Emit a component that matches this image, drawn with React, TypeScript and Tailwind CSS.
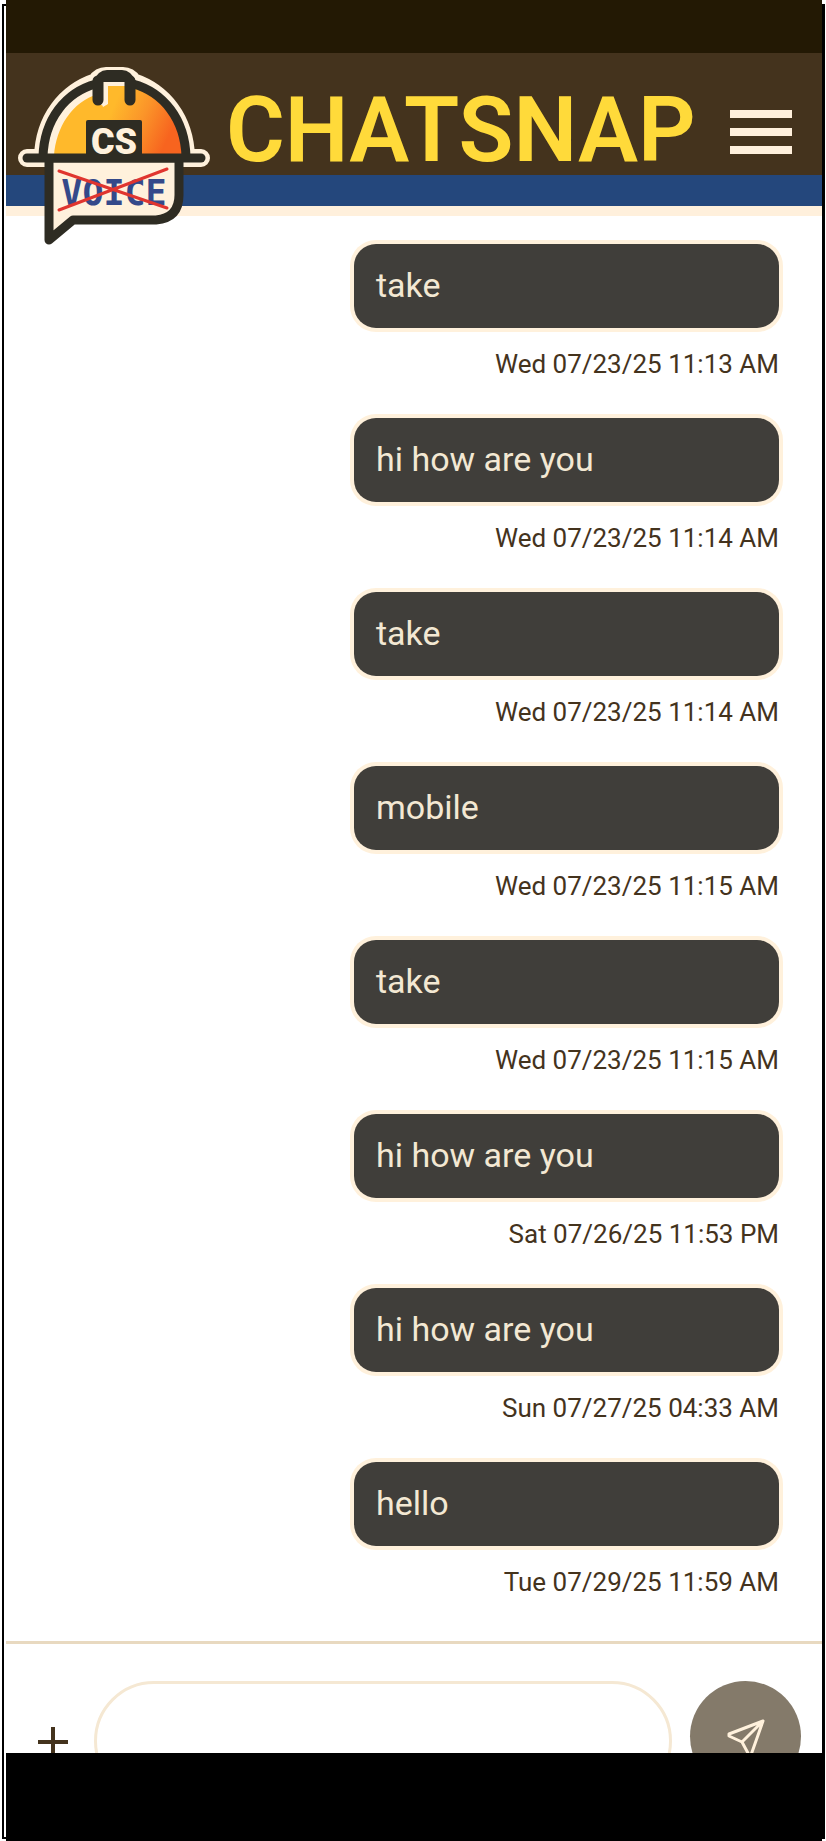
import { useState } from 'react';

interface Message {
  id: number;
  text: string;
  time: string;
}

const messages: Message[] = [
  { id: 1, text: 'take', time: 'Wed 07/23/25 11:13 AM' },
  { id: 2, text: 'hi how are you', time: 'Wed 07/23/25 11:14 AM' },
  { id: 3, text: 'take', time: 'Wed 07/23/25 11:14 AM' },
  { id: 4, text: 'mobile', time: 'Wed 07/23/25 11:15 AM' },
  { id: 5, text: 'take', time: 'Wed 07/23/25 11:15 AM' },
  { id: 6, text: 'hi how are you', time: 'Sat 07/26/25 11:53 PM' },
  { id: 7, text: 'hi how are you', time: 'Sun 07/27/25 04:33 AM' },
  { id: 8, text: 'hello', time: 'Tue 07/29/25 11:59 AM' },
];

// Hard hat on top of a speech bubble
const Logo: React.FC = () => (
  <svg viewBox="0 0 200 186" className="h-[186px] w-[200px]" role="img" aria-label="CS Voice">
    <defs>
      <linearGradient id="hat" x1="0" y1="0" x2="1" y2="0.25">
        <stop offset="0.5" stopColor="#ffb92b" />
        <stop offset="0.75" stopColor="#fb9429" />
        <stop offset="1" stopColor="#f7641f" />
      </linearGradient>
    </defs>
    {/* cream outline */}
    <path
      d="M29 96 C30 58 52 31 82 21 Q86 15 92 15 H109 Q115 15 119 21 C149 31 171 58 172 96 Z M13 97 H187"
      fill="#fff1dc"
      stroke="#fff1dc"
      strokeWidth="18"
      strokeLinecap="round"
      strokeLinejoin="round"
    />
    {/* bubble */}
    <path
      d="M35 97 V179 L59 159 H142 Q165 157 165 134 V97 Z"
      fill="#fff1dc"
      stroke="#2e2c23"
      strokeWidth="9"
      strokeLinejoin="round"
    />
    {/* dome */}
    <path d="M29 96 C30 58 52 31 82 23 H119 C149 31 171 58 172 96 Z" fill="#fff1dc" />
    <path d="M40 95 C42 66 58 41 84 33 L89 46 L94 43 V25 H119 C149 33 169 60 170 95 Z" fill="url(#hat)" />
    <path d="M29 96 C30 58 52 31 82 23 M119 23 C149 31 171 58 172 96" fill="none" stroke="#2e2c23" strokeWidth="9" />
    <path d="M89 20 H111 V25 H94 V42 Q92 45 87 44 Z" fill="#fff1dc" />
    <path d="M84 39 V20 M116 39 V20" stroke="#2e2c23" strokeWidth="11" strokeLinecap="round" />
    <path d="M79 21 Q84 9 93 9 H108 Q117 9 122 21 Z" fill="#2e2c23" />
    <rect x="72" y="59" width="56" height="38" rx="2" fill="#2e2c23" />
    <path d="M13 97 H187" stroke="#2e2c23" strokeWidth="9" strokeLinecap="round" />
    <text x="100" y="93" textAnchor="middle" className="fill-[#fff1dc] font-[Roboto] text-[36px] font-black">CS</text>
    <text x="100" y="144" textAnchor="middle" className="fill-[#34498a] font-['DejaVu_Sans_Mono'] text-[35px] font-bold">VOICE</text>
    <path d="M45 110 L153 147 M153 108 L45 149" stroke="#e0352f" strokeWidth="3" strokeLinecap="round" />
  </svg>
);

const SendIcon: React.FC = () => (
  <svg viewBox="0 0 38 38" className="h-[38px] w-[38px] overflow-visible" fill="none" stroke="#fff1dc" strokeWidth="3" strokeLinejoin="round">
    <path d="M36 3 L2 16 V18 L15 24 L22 37 H24 Z M15 24 L36 3" />
  </svg>
);

const App: React.FC = () => {
  const [draft, setDraft] = useState('');

  return (
    <div className="relative min-h-screen bg-white pr-1 pl-1.5 font-[Roboto,sans-serif]">
      {/* Window frame */}
      <div className="pointer-events-none absolute top-1 right-px bottom-0.5 left-0.5 border-2 border-r-3 border-black" />

      <div className="relative flex min-h-screen flex-col bg-white">
        <header className="shrink-0">
          <div className="h-[53px] bg-[#231904]" />
          <div className="relative flex h-[122px] items-center justify-between bg-[#44331d] pr-[30px] pl-[220px]">
            <div className="absolute top-2 left-2 z-10">
              <Logo />
            </div>
            <h1 className="pt-[34px] text-[90px] leading-[88px] font-semibold text-[#ffda3a]">CHATSNAP</h1>
            <button type="button" aria-label="Menu" className="mt-[35px] flex w-[62px] flex-col gap-[10px]">
              <span className="h-2 bg-[#fff0dc]" />
              <span className="h-2 bg-[#fff0dc]" />
              <span className="h-2 bg-[#fff0dc]" />
            </button>
          </div>
          <div className="h-[31px] bg-[#24477c]" />
          <div className="h-[10px] bg-[#fff0dc]" />
        </header>

        <main className="flex grow flex-col gap-[34px] pt-7 pr-[43px]">
          {messages.map((message) => (
            <article key={message.id} className="flex w-[425px] flex-col gap-4 self-end">
              <p className="rounded-[22px] bg-[#403e3a] px-[22px] pt-[21px] pb-[23px] text-[34px] leading-10 text-[#f3e8d3] shadow-[0_0_0_4px_#fff1dc]">
                {message.text}
              </p>
              <time className="text-right text-[26px] leading-10 text-[#44331d]">{message.time}</time>
            </article>
          ))}
        </main>

        <form
          onSubmit={(e) => e.preventDefault()}
          className="flex h-[112px] shrink-0 items-start gap-[18px] overflow-hidden border-t-3 border-[#e8d9c0] pt-[37px] pr-[21px] pl-8"
        >
          <button type="button" aria-label="Add" className="mt-[46px] mr-2 h-[30px] w-[30px] shrink-0">
            <svg viewBox="0 0 30 30" className="h-[30px] w-[30px]" stroke="#44331d" strokeWidth="4">
              <path d="M15 0 V30 M0 15 H30" />
            </svg>
          </button>
          <input
            type="text"
            aria-label="Message"
            value={draft}
            onChange={(e) => setDraft(e.target.value)}
            className="h-[120px] min-w-0 grow rounded-full border-3 border-[#f5e8d3] px-8 text-[34px] outline-none"
          />
          <button type="submit" aria-label="Send" className="flex h-[111px] w-[111px] shrink-0 items-center justify-center rounded-full bg-[#847a6a]">
            <SendIcon />
          </button>
        </form>
        <div className="h-[88px] shrink-0 bg-black" />
      </div>
    </div>
  );
};

export default App;
